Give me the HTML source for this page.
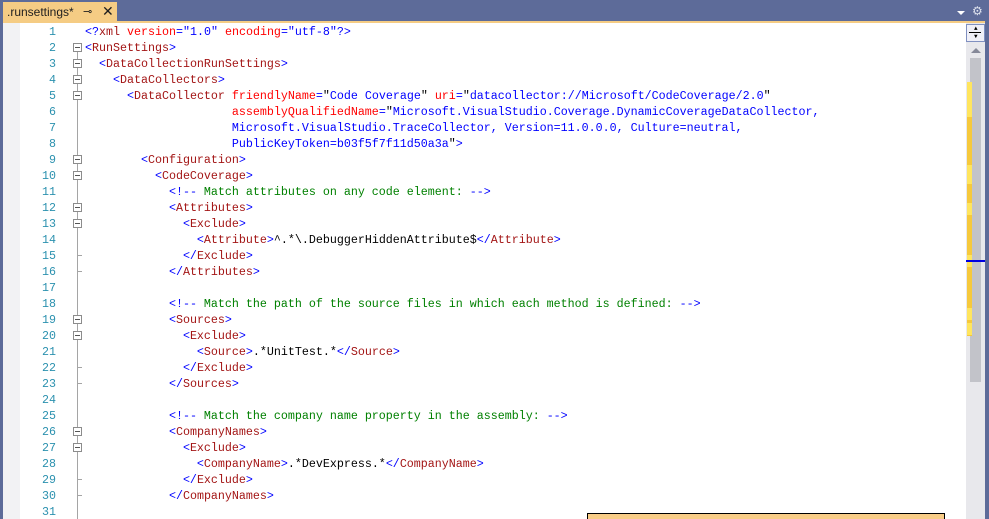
<!DOCTYPE html>
<html style="overflow:hidden;width:989px;height:519px"><head><style>
body{margin:0;width:989px;height:519px;overflow:hidden;background:#5d6b99;position:relative;font-family:"Liberation Mono",monospace;}
#tab{position:absolute;left:3px;top:2px;width:114px;height:20px;background:#f5cc84;font:12px "Liberation Sans",sans-serif;color:#1e1e1e;}
#tab span{position:absolute;top:3px}
#ul{position:absolute;left:3px;top:21px;width:982px;height:2px;background:#f5cc84}
#ed{position:absolute;left:3px;top:23px;width:963px;height:496px;background:#fff}
#gut{position:absolute;left:3px;top:23px;width:17px;height:496px;background:#f2f2f4}
.ln{position:absolute;left:20px;width:36px;text-align:right;color:#2b91af;font-size:11.67px;line-height:16px}
.c{position:absolute;left:85px;white-space:pre;font-size:11.67px;line-height:16px;color:#000}
.b{color:#0000ff}.e{color:#a31515}.a{color:#ff0000}.g{color:#008000}
.box{position:absolute;left:73px;width:7px;height:7px;border:1px solid #8c8c8c;background:#fff}
.box:after{content:"";position:absolute;left:1px;top:3px;width:5px;height:1px;background:#555}
.vl{position:absolute;left:77px;width:1px;background:#a5a5a5}
.tk{position:absolute;left:77px;width:5px;height:1px;background:#a5a5a5}
#sb{position:absolute;left:966px;top:23px;width:19px;height:496px;background:#e8e8ec}
#rb{position:absolute;left:985px;top:23px;width:4px;height:496px;background:#5d6b99}
</style></head><body>
<div id="tab"><span style="left:4px">.runsettings*</span><span style="left:80px;font-size:11px">⊸</span><span style="left:99px;font-size:14px;top:1px">✕</span></div>
<div style="position:absolute;left:957px;top:11px;width:0;height:0;border-left:4px solid transparent;border-right:4px solid transparent;border-top:4px solid #fff"></div>
<div style="position:absolute;left:972px;top:4px;color:#dfe3ee;font-size:12px">⚙</div>
<div id="ul"></div>
<div id="ed"></div>
<div id="gut"></div>
<div id="sb">
<div style="position:absolute;left:0;top:1px;width:17px;height:16px;border:1px solid #8090c0;background:#f0f0f8"></div>
<div style="position:absolute;left:3px;top:9px;width:12px;height:1px;background:#000"></div>
<div style="position:absolute;left:8px;top:3px;font-size:6px;line-height:6px">▲</div>
<div style="position:absolute;left:8px;top:11px;font-size:6px;line-height:6px">▼</div>
<div style="position:absolute;left:5px;top:25px;border-left:5px solid transparent;border-right:5px solid transparent;border-bottom:5px solid #868999"></div>
<div style="position:absolute;left:4px;top:35px;width:11px;height:324px;background:#c2c3c9"></div>
<div style="position:absolute;left:1px;top:59px;width:5px;height:254px;background:#f6c93c"></div>
<div style="position:absolute;left:1px;top:59px;width:5px;height:35px;background:#ffe55e"></div>
<div style="position:absolute;left:1px;top:142px;width:5px;height:19px;background:#ffe55e"></div>
<div style="position:absolute;left:1px;top:180px;width:5px;height:12px;background:#ffe55e"></div>
<div style="position:absolute;left:1px;top:232px;width:5px;height:12px;background:#ffe55e"></div>
<div style="position:absolute;left:1px;top:285px;width:5px;height:12px;background:#ffe55e"></div>
<div style="position:absolute;left:1px;top:300px;width:5px;height:12px;background:#ffe55e"></div>
<div style="position:absolute;left:0;top:237px;width:19px;height:2px;background:#0000e0"></div>
</div>
<div id="rb"></div>
<div style="position:absolute;left:587px;top:513px;width:356px;height:6px;background:#f9cd87;border:1px solid #000;border-bottom:none"></div>

<div class="vl" style="top:48px;height:471px"></div>

<div class="ln" style="top:24px">1</div><div class="c" style="top:24px"><span class="b">&lt;?</span><span class="e">xml</span> <span class="a">version</span><span class="b">="</span><span class="b">1.0</span><span class="b">"</span> <span class="a">encoding</span><span class="b">="utf-8"?&gt;</span></div>
<div class="ln" style="top:40px">2</div><div class="box" style="top:43px"></div><div class="c" style="top:40px"><span class="b">&lt;</span><span class="e">RunSettings</span><span class="b">&gt;</span></div>
<div class="ln" style="top:56px">3</div><div class="box" style="top:59px"></div><div class="c" style="top:56px">  <span class="b">&lt;</span><span class="e">DataCollectionRunSettings</span><span class="b">&gt;</span></div>
<div class="ln" style="top:72px">4</div><div class="box" style="top:75px"></div><div class="c" style="top:72px">    <span class="b">&lt;</span><span class="e">DataCollectors</span><span class="b">&gt;</span></div>
<div class="ln" style="top:88px">5</div><div class="box" style="top:91px"></div><div class="c" style="top:88px">      <span class="b">&lt;</span><span class="e">DataCollector</span> <span class="a">friendlyName</span><span class="b">=</span>"<span class="b">Code Coverage</span>" <span class="a">uri</span><span class="b">=</span>"<span class="b">datacollector://Microsoft/CodeCoverage/2.0</span>"</div>
<div class="ln" style="top:104px">6</div><div class="c" style="top:104px">                     <span class="a">assemblyQualifiedName</span><span class="b">=</span>"<span class="b">Microsoft.VisualStudio.Coverage.DynamicCoverageDataCollector,</span></div>
<div class="ln" style="top:120px">7</div><div class="c" style="top:120px">                     <span class="b">Microsoft.VisualStudio.TraceCollector, Version=11.0.0.0, Culture=neutral,</span></div>
<div class="ln" style="top:136px">8</div><div class="c" style="top:136px">                     <span class="b">PublicKeyToken=b03f5f7f11d50a3a</span>"<span class="b">&gt;</span></div>
<div class="ln" style="top:152px">9</div><div class="box" style="top:155px"></div><div class="c" style="top:152px">        <span class="b">&lt;</span><span class="e">Configuration</span><span class="b">&gt;</span></div>
<div class="ln" style="top:168px">10</div><div class="box" style="top:171px"></div><div class="c" style="top:168px">          <span class="b">&lt;</span><span class="e">CodeCoverage</span><span class="b">&gt;</span></div>
<div class="ln" style="top:184px">11</div><div class="c" style="top:184px">            <span class="b">&lt;!--</span><span class="g"> Match attributes on any code element: </span><span class="b">--&gt;</span></div>
<div class="ln" style="top:200px">12</div><div class="box" style="top:203px"></div><div class="c" style="top:200px">            <span class="b">&lt;</span><span class="e">Attributes</span><span class="b">&gt;</span></div>
<div class="ln" style="top:216px">13</div><div class="box" style="top:219px"></div><div class="c" style="top:216px">              <span class="b">&lt;</span><span class="e">Exclude</span><span class="b">&gt;</span></div>
<div class="ln" style="top:232px">14</div><div class="c" style="top:232px">                <span class="b">&lt;</span><span class="e">Attribute</span><span class="b">&gt;</span>^.*\.DebuggerHiddenAttribute$<span class="b">&lt;/</span><span class="e">Attribute</span><span class="b">&gt;</span></div>
<div class="ln" style="top:248px">15</div><div class="tk" style="top:255px"></div><div class="c" style="top:248px">              <span class="b">&lt;/</span><span class="e">Exclude</span><span class="b">&gt;</span></div>
<div class="ln" style="top:264px">16</div><div class="tk" style="top:271px"></div><div class="c" style="top:264px">            <span class="b">&lt;/</span><span class="e">Attributes</span><span class="b">&gt;</span></div>
<div class="ln" style="top:280px">17</div>
<div class="ln" style="top:296px">18</div><div class="c" style="top:296px">            <span class="b">&lt;!--</span><span class="g"> Match the path of the source files in which each method is defined: </span><span class="b">--&gt;</span></div>
<div class="ln" style="top:312px">19</div><div class="box" style="top:315px"></div><div class="c" style="top:312px">            <span class="b">&lt;</span><span class="e">Sources</span><span class="b">&gt;</span></div>
<div class="ln" style="top:328px">20</div><div class="box" style="top:331px"></div><div class="c" style="top:328px">              <span class="b">&lt;</span><span class="e">Exclude</span><span class="b">&gt;</span></div>
<div class="ln" style="top:344px">21</div><div class="c" style="top:344px">                <span class="b">&lt;</span><span class="e">Source</span><span class="b">&gt;</span>.*UnitTest.*<span class="b">&lt;/</span><span class="e">Source</span><span class="b">&gt;</span></div>
<div class="ln" style="top:360px">22</div><div class="tk" style="top:367px"></div><div class="c" style="top:360px">              <span class="b">&lt;/</span><span class="e">Exclude</span><span class="b">&gt;</span></div>
<div class="ln" style="top:376px">23</div><div class="tk" style="top:383px"></div><div class="c" style="top:376px">            <span class="b">&lt;/</span><span class="e">Sources</span><span class="b">&gt;</span></div>
<div class="ln" style="top:392px">24</div>
<div class="ln" style="top:408px">25</div><div class="c" style="top:408px">            <span class="b">&lt;!--</span><span class="g"> Match the company name property in the assembly: </span><span class="b">--&gt;</span></div>
<div class="ln" style="top:424px">26</div><div class="box" style="top:427px"></div><div class="c" style="top:424px">            <span class="b">&lt;</span><span class="e">CompanyNames</span><span class="b">&gt;</span></div>
<div class="ln" style="top:440px">27</div><div class="box" style="top:443px"></div><div class="c" style="top:440px">              <span class="b">&lt;</span><span class="e">Exclude</span><span class="b">&gt;</span></div>
<div class="ln" style="top:456px">28</div><div class="c" style="top:456px">                <span class="b">&lt;</span><span class="e">CompanyName</span><span class="b">&gt;</span>.*DevExpress.*<span class="b">&lt;/</span><span class="e">CompanyName</span><span class="b">&gt;</span></div>
<div class="ln" style="top:472px">29</div><div class="tk" style="top:479px"></div><div class="c" style="top:472px">              <span class="b">&lt;/</span><span class="e">Exclude</span><span class="b">&gt;</span></div>
<div class="ln" style="top:488px">30</div><div class="tk" style="top:495px"></div><div class="c" style="top:488px">            <span class="b">&lt;/</span><span class="e">CompanyNames</span><span class="b">&gt;</span></div>
<div class="ln" style="top:504px">31</div>
</body></html>
